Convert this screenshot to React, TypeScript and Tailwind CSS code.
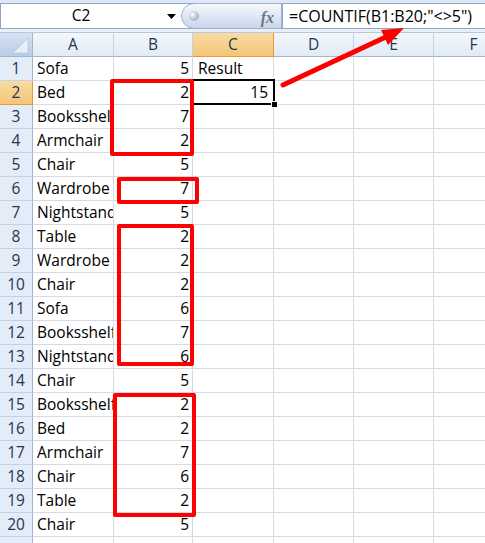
import React from "react";

const data: [string, number][] = [
  ["Sofa", 5],
  ["Bed", 2],
  ["Booksshelf", 7],
  ["Armchair", 2],
  ["Chair", 5],
  ["Wardrobe", 7],
  ["Nightstand", 5],
  ["Table", 2],
  ["Wardrobe", 2],
  ["Chair", 2],
  ["Sofa", 6],
  ["Booksshelf", 7],
  ["Nightstand", 6],
  ["Chair", 5],
  ["Booksshelf", 2],
  ["Bed", 2],
  ["Armchair", 7],
  ["Chair", 6],
  ["Table", 2],
  ["Chair", 5],
];

const cols = ["A", "B", "C", "D", "E", "F"];

const font = { fontFamily: '"Open Sans", "Liberation Sans", sans-serif' };

export default function App() {
  return (
    <div
      className="relative w-[485px] h-[543px] overflow-hidden bg-white text-[15.5px] text-black"
      style={font}
    >
      {/* Formula bar */}
      <div className="bg-[#dfe8f5] pt-[3px]">
        <div className="flex h-[26px] border-y border-[#8ea6c6] bg-white">
          <div className="relative flex w-[181px] items-center border-l border-[#8ea6c6] bg-white">
            <span className="w-[160px] text-center leading-none">C2</span>
            <svg className="absolute left-[166px] top-[10px]" width="9" height="6" viewBox="0 0 9 6">
              <polygon points="0,0 9,0 4.5,5" fill="#000" />
            </svg>
          </div>
          <div className="relative -my-[1px] flex w-[101px] items-center rounded-l-[13px] border border-[#9bb3d3] bg-gradient-to-b from-[#f6f9fd] via-[#dfe8f5] to-[#c7d6ea]">
            <div className="ml-[7px] h-[10px] w-[10px] rounded-full bg-[radial-gradient(circle_at_35%_35%,#ffffff_0%,#c4ccd6_45%,#8d98a6_100%)]" />
            <span
              className="absolute right-[7px] top-[2px] text-[16px] font-bold italic text-[#6b7684]"
              style={{ fontFamily: '"Liberation Serif", "DejaVu Serif", serif' }}
            >
              fx
            </span>
          </div>
          <div className="flex flex-1 items-center border-l border-[#8ea6c6] pl-[6px] text-[16px] leading-none">
            =COUNTIF(B1:B20;"&lt;&gt;5")
          </div>
        </div>
        <div className="h-[3px] bg-[#e9eff7]" />
        <div className="h-px bg-[#b7c8dd]" />
      </div>

      {/* Grid */}
      <div className="grid grid-cols-[33px_81px_79px_81px_80px_80px_80px]">
        {/* header row */}
        <div className="relative h-[24px] border-r border-b border-[#9eb6ce] bg-gradient-to-b from-[#d5e2f2] to-[#b9cde6]">
          <svg className="absolute left-0 top-0" width="32" height="23" viewBox="0 0 32 23">
            <polygon points="28,5 28,20 13,20" fill="#e9eff8" stroke="#aebfd6" strokeWidth="0.6" />
          </svg>
        </div>
        {cols.map((c) => (
          <div
            key={c}
            className={
              c === "C"
                ? "flex h-[24px] items-center justify-center border-r border-b border-[#f29536] bg-gradient-to-b from-[#f9dba3] to-[#f3c676] text-[#1f3652]"
                : "flex h-[24px] items-center justify-center border-r border-b border-[#c5d2e2] border-b-[#9eb6ce] bg-gradient-to-b from-[#f4f7fb] to-[#e2eaf5] text-[#1f3652]"
            }
          >
            <span className="leading-none">{c}</span>
          </div>
        ))}

        {/* data rows */}
        {[...data, null].map((row, i) => {
          const r = i + 1;
          const sel = r === 2;
          return (
            <React.Fragment key={r}>
              <div
                className={
                  sel
                    ? "flex h-[24px] items-center justify-center border-r border-b border-[#f29536] bg-gradient-to-b from-[#f9dba3] to-[#f3c676] text-[#1f3652]"
                    : "flex h-[24px] items-center justify-center border-r border-b border-[#9eb6ce] border-b-[#c5d2e2] bg-[#e4ecf7] text-[#1f3652]"
                }
              >
                <span className="leading-none">{row ? r : ""}</span>
              </div>
              <div className="flex h-[24px] items-center overflow-hidden whitespace-nowrap border-r border-b border-[#d4dbe6] pl-[4px]">
                <span className="leading-none">{row ? row[0] : ""}</span>
              </div>
              <div className="flex h-[24px] items-center justify-end border-r border-b border-[#d4dbe6] pr-[3px]">
                <span className="leading-none">{row ? row[1] : ""}</span>
              </div>
              <div
                className={
                  "flex h-[24px] items-center border-r border-b border-[#d4dbe6] " +
                  (r === 2 ? "justify-end pr-[5px]" : "pl-[5px]")
                }
              >
                <span className="leading-none">{r === 1 ? "Result" : r === 2 ? "15" : ""}</span>
              </div>
              <div className="h-[24px] border-r border-b border-[#d4dbe6]" />
              <div className="h-[24px] border-r border-b border-[#d4dbe6]" />
              <div className="h-[24px] border-r border-b border-[#d4dbe6]" />
            </React.Fragment>
          );
        })}
      </div>

      {/* selection C2 */}
      <div className="pointer-events-none absolute left-[192px] top-[79px] h-[26px] w-[83px] border-2 border-black" />
      <div className="pointer-events-none absolute left-[271px] top-[101px] h-[7px] w-[7px] border border-white bg-black" />

      {/* red boxes */}
      <div className="pointer-events-none absolute left-[110px] top-[79px] h-[77px] w-[84px] rounded-[2px] border-[4px] border-[#ff0000]" />
      <div className="pointer-events-none absolute left-[117px] top-[177px] h-[27px] w-[82px] rounded-[2px] border-[4px] border-[#ff0000]" />
      <div className="pointer-events-none absolute left-[117px] top-[224px] h-[142px] w-[77px] rounded-[2px] border-[4px] border-[#ff0000]" />
      <div className="pointer-events-none absolute left-[113px] top-[393px] h-[124px] w-[83px] rounded-[2px] border-[4px] border-[#ff0000]" />

      {/* arrow */}
      <svg className="pointer-events-none absolute left-0 top-0" width="485" height="543" viewBox="0 0 485 543">
        <line x1="283" y1="85" x2="388" y2="36" stroke="#ff0000" strokeWidth="5" strokeLinecap="round" />
        <polygon points="404,28 388,45 381,30" fill="#ff0000" />
      </svg>
    </div>
  );
}
